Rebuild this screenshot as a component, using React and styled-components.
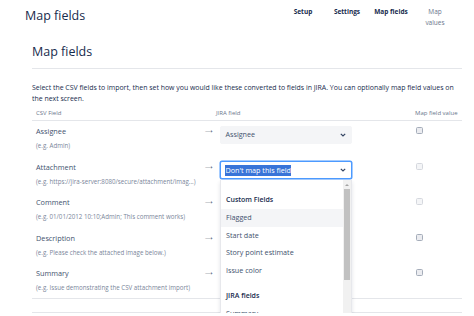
import styled, { createGlobalStyle } from 'styled-components';

const GlobalStyle = createGlobalStyle`
  html, body {
    margin: 0;
    padding: 0;
    background: #fff;
    overflow: hidden;
  }
  body {
    font-family: 'Open Sans', 'Noto Sans', sans-serif;
    color: #172b4d;
  }
`;

const TopBar = styled.header`
  display: flex;
  justify-content: space-between;
  align-items: flex-start;
  height: 36px;
  padding: 0 17px 0 25px;
`;

const Title = styled.h1`
  margin: 8px 0 0;
  font-size: 12.5px;
  line-height: 16px;
  font-weight: 400;
  color: #172b4d;
`;

const Nav = styled.nav`
  display: flex;
  padding-top: 7px;
`;

const NavItem = styled.a`
  display: block;
  flex: none;
  width: 44px;
  text-align: center;
  font-size: 6.5px;
  line-height: 10.5px;
  font-weight: ${(p) => (p.$muted ? 400 : 700)};
  color: ${(p) => (p.$muted ? '#6b778c' : '#172b4d')};
  ${(p) => p.$muted && 'padding: 0 12px; box-sizing: border-box;'}
`;

const Main = styled.main`
  padding: 0 12px 0 32px;
`;

const Heading = styled.h2`
  margin: 7.5px 0 0;
  padding-bottom: 8px;
  border-bottom: 1px solid #e4e6ea;
  font-size: 12.5px;
  line-height: 16px;
  font-weight: 400;
  color: #172b4d;
`;

const Intro = styled.p`
  margin: 13px 0 0;
  font-size: 6.95px;
  line-height: 11px;
  color: #172b4d;
`;

const cols = '168px 16px 199px 1fr';

const HeadRow = styled.div`
  display: grid;
  grid-template-columns: ${cols};
  padding: 4.5px 0 1.5px;
  border-bottom: 1px solid #e4e6ea;
  font-size: 6px;
  line-height: 10px;
  color: #6b778c;
`;

const HeadCell = styled.div`
  padding-left: ${(p) => p.$pad || 0}px;
  grid-column: ${(p) => p.$col || 'auto'};
`;

const Row = styled.div`
  display: grid;
  grid-template-columns: ${cols};
  box-sizing: border-box;
  border-bottom: ${(p) => (p.$last ? '1px solid #e4e6ea' : 'none')};
  height: ${(p) => (p.$last ? '36.5px' : '35.5px')};
`;

const FieldCell = styled.div`
  padding: 5.5px 0 0 4px;
`;

const FieldName = styled.div`
  font-size: 7.3px;
  line-height: 11px;
  color: #42526e;
`;

const Example = styled.div`
  margin-top: 4px;
  font-size: 6.2px;
  line-height: 9px;
  color: #7a869a;
  white-space: nowrap;
`;

const Arrow = styled.div`
  padding: 5.5px 0 0 5px;
  font-family: 'DejaVu Sans', sans-serif;
  font-size: 5.2px;
  line-height: 11px;
  color: #344563;
`;

const SelectCell = styled.div`
  position: relative;
  padding: 5px 0 0 4px;
`;

const Select = styled.div`
  box-sizing: border-box;
  width: 132px;
  height: 18px;
  display: flex;
  align-items: center;
  justify-content: space-between;
  padding: 0 5px 0 4px;
  border-radius: 2px;
  background: ${(p) => (p.$focused ? '#fff' : '#f4f5f7')};
  border: 1px solid ${(p) => (p.$focused ? '#4c9aff' : '#f4f5f7')};
  box-shadow: ${(p) => (p.$focused ? '0 0 0 0.5px #4c9aff' : 'none')};
  font-size: 7.2px;
  color: #42526e;
  visibility: ${(p) => (p.$covered ? 'hidden' : 'visible')};
`;

const Selected = styled.span`
  background: ${(p) => (p.$highlight ? '#3874d8' : 'transparent')};
  color: ${(p) => (p.$highlight ? '#fff' : 'inherit')};
  line-height: 11px;
  padding: 0 0.5px;
`;

const Chevron = () => (
  <svg width="6" height="4" viewBox="0 0 6 4">
    <path d="M0.8 0.8 L3 3 L5.2 0.8" fill="none" stroke="#344563" strokeWidth="1.2" />
  </svg>
);

const CheckCell = styled.div`
  padding: 6.5px 0 0 1px;
`;

const Checkbox = styled.input`
  appearance: none;
  margin: 0;
  width: 7px;
  height: 7px;
  box-sizing: border-box;
  border: 1px solid ${(p) => (p.$dim ? '#d5d8de' : '#a5adba')};
  border-radius: 1.5px;
  background: ${(p) => (p.$dim ? '#f4f5f7' : '#ebecf0')};
  display: block;
`;

const Footer = styled.div`
  margin-top: 13px;
  border-top: 1px solid #e4e6ea;
`;

const Dropdown = styled.div`
  position: absolute;
  z-index: 10;
  top: 24px;
  left: 4px;
  width: 132px;
  height: 150px;
  display: flex;
  background: #fff;
  border: 1px solid #e7e8ec;
  border-top: none;
  box-sizing: border-box;
  box-shadow: 0 2px 4px rgba(9, 30, 66, 0.12);
  overflow: hidden;
`;

const OptionList = styled.ul`
  flex: 1;
  list-style: none;
  margin: 0;
  padding: 10px 0 0;
`;

const Group = styled.li`
  margin-top: ${(p) => (p.$first ? 0 : 6.5)}px;
  padding-left: 5px;
  height: 19px;
  line-height: 19px;
  font-size: 7px;
  font-weight: 600;
  color: #172b4d;
`;

const Option = styled.li`
  padding-left: 5px;
  height: 17.5px;
  line-height: 17.5px;
  font-size: 7.2px;
  color: #42526e;
  background: ${(p) => (p.$hover ? '#f4f5f7' : 'transparent')};
`;

const Scrollbar = styled.div`
  width: 8px;
  display: flex;
  flex-direction: column;
  align-items: center;
  background: #f1f1f1;
`;

const ScrollArrow = styled.div`
  margin-top: 4px;
  width: 0;
  height: 0;
  border-left: 2px solid transparent;
  border-right: 2px solid transparent;
  border-bottom: 2px solid #a3a3a3;
`;

const ScrollThumb = styled.div`
  margin-top: 3px;
  width: 6px;
  height: 91px;
  background: #c1c1c1;
`;

const fields = [
  { name: 'Assignee', example: '(e.g. Admin)', value: 'Assignee' },
  { name: 'Attachment', example: '(e.g. https://jira-server:8080/secure/attachment/imag...)', value: "Don't map this field", open: true },
  { name: 'Comment', example: '(e.g. 01/01/2012 10:10;Admin; This comment works)', value: 'Comment', covered: true },
  { name: 'Description', example: '(e.g. Please check the attached image below.)', value: 'Description', covered: true },
  { name: 'Summary', example: '(e.g. Issue demonstrating the CSV attachment import)', value: 'Summary', covered: true },
];

export default function App() {
  return (
    <>
      <GlobalStyle />
      <TopBar>
        <Title>Map fields</Title>
        <Nav>
          <NavItem>Setup</NavItem>
          <NavItem>Settings</NavItem>
          <NavItem>Map fields</NavItem>
          <NavItem $muted>Map values</NavItem>
        </Nav>
      </TopBar>
      <Main>
        <Heading>Map fields</Heading>
        <Intro>
          Select the CSV fields to import, then set how you would like these converted to fields in JIRA. You can
          optionally map field values on the next screen.
        </Intro>
        <HeadRow>
          <HeadCell $pad={4}>CSV Field</HeadCell>
          <HeadCell $col="3">JIRA field</HeadCell>
          <HeadCell>Map field value</HeadCell>
        </HeadRow>
        {fields.map((f, i) => (
          <Row key={f.name} $last={i === fields.length - 1}>
            <FieldCell>
              <FieldName>{f.name}</FieldName>
              <Example>{f.example}</Example>
            </FieldCell>
            <Arrow>⟶</Arrow>
            <SelectCell>
              <Select $focused={f.open} $covered={f.covered}>
                <Selected $highlight={f.open}>{f.value}</Selected>
                <Chevron />
              </Select>
              {f.open && (
                <Dropdown>
                  <OptionList>
                    <Group $first>Custom Fields</Group>
                    <Option $hover>Flagged</Option>
                    <Option>Start date</Option>
                    <Option>Story point estimate</Option>
                    <Option>Issue color</Option>
                    <Group>JIRA fields</Group>
                    <Option>Summary</Option>
                  </OptionList>
                  <Scrollbar>
                    <ScrollArrow />
                    <ScrollThumb />
                  </Scrollbar>
                </Dropdown>
              )}
            </SelectCell>
            <CheckCell>
              <Checkbox type="checkbox" readOnly $dim={i === 1 || i === 2} />
            </CheckCell>
          </Row>
        ))}
        <Footer />
      </Main>
    </>
  );
}
